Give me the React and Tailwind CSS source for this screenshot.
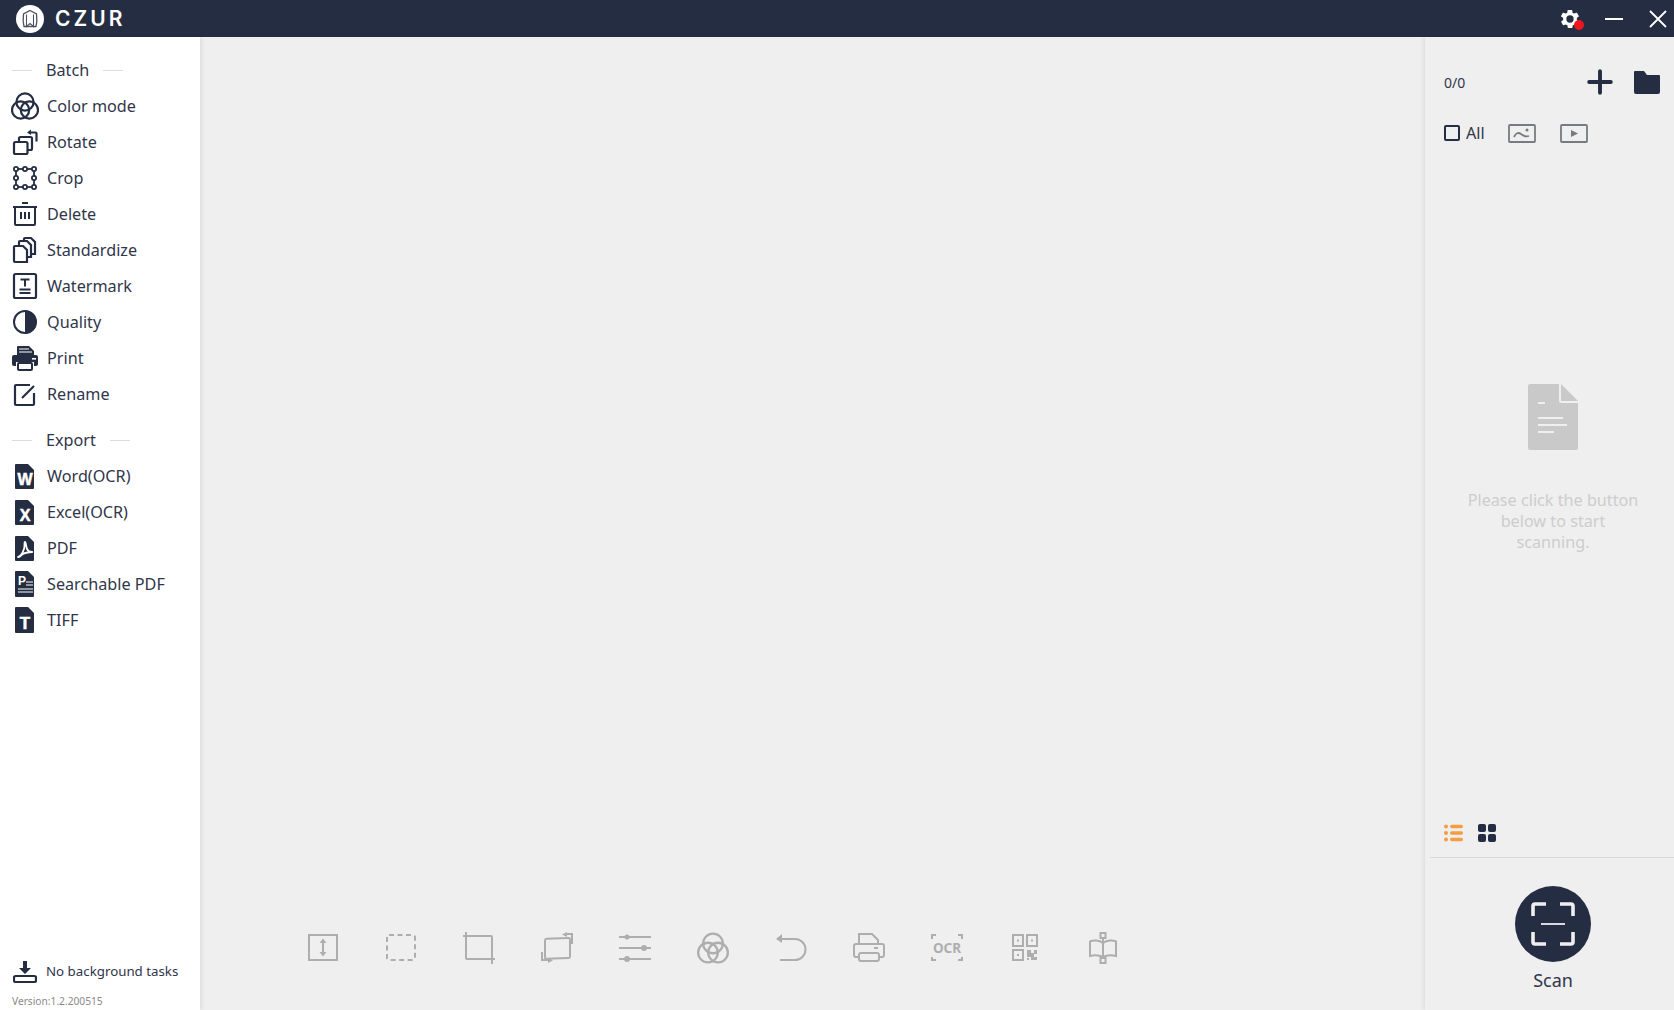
import React from "react"

const navy = "#252d43"

// sidebar icons, 28x28 box
const ColorIcon = ({ color = navy, w = 2.2 }) => (
    <svg viewBox="0 0 28 28" className="w-full h-full" fill="none" stroke={color} strokeWidth={w}>
        <circle cx="14" cy="10" r="8.6" />
        <circle cx="9.6" cy="18" r="8.6" />
        <circle cx="18.4" cy="18" r="8.6" />
    </svg>
)

const RotateIcon = () => (
    <svg viewBox="0 0 28 28" className="w-full h-full" fill="none" stroke={navy} strokeWidth="2.2">
        <rect x="3" y="14" width="13.5" height="12" rx="1.5" />
        <path d="M8 14v-3.5a1.5 1.5 0 0 1 1.5-1.5h10a1.5 1.5 0 0 1 1.5 1.5v10a1.5 1.5 0 0 1-1.5 1.5h-3" />
        <path d="M18 4.5h6.5a1 1 0 0 1 1 1v8" />
        <path d="M20 1.5l-4 3 4 2.5z" fill={navy} stroke="none" />
    </svg>
)

const CropIcon = () => (
    <svg viewBox="0 0 28 28" className="w-full h-full" fill="none" stroke={navy} strokeWidth="1.8">
        <rect x="5" y="5" width="18" height="18" />
        {[[5, 5], [14, 5], [23, 5], [5, 14], [23, 14], [5, 23], [14, 23], [23, 23]].map(([x, y], i) => (
            <circle key={i} cx={x} cy={y} r="2.1" fill="#fff" />
        ))}
    </svg>
)

const DeleteIcon = () => (
    <svg viewBox="0 0 28 28" className="w-full h-full" fill="none" stroke={navy} strokeWidth="2">
        <path d="M11 3h6M2 7h24M4 7v17a1 1 0 0 0 1 1h18a1 1 0 0 0 1-1V7M10 12v7M14 12v7M18 12v7" />
    </svg>
)

const StandardizeIcon = () => (
    <svg viewBox="0 0 28 28" className="w-full h-full" fill="none" stroke={navy} strokeWidth="2.2">
        <path d="M4 10h8l4 4v12H4a1 1 0 0 1-1-1V11a1 1 0 0 1 1-1z" />
        <path d="M8 10V6a1 1 0 0 1 1-1h7l4 4v12h-4" />
        <path d="M13 5V3a1 1 0 0 1 1-1h6l4 4v12h-4" />
    </svg>
)

const WatermarkIcon = () => (
    <svg viewBox="0 0 28 28" className="w-full h-full" fill="none" stroke={navy} strokeWidth="2">
        <rect x="3" y="2" width="22" height="24" rx="1.5" strokeWidth="2.2" />
        <path d="M9.5 7.5h9M14 7.5v7" />
        <path d="M8.5 17.5h11M8.5 21h11" />
    </svg>
)

const QualityIcon = () => (
    <svg viewBox="0 0 28 28" className="w-full h-full">
        <circle cx="14" cy="14" r="11" fill="none" stroke={navy} strokeWidth="2" />
        <path d="M14 2.5a11.5 11.5 0 0 1 0 23z" fill={navy} />
    </svg>
)

const PrintIcon = () => (
    <svg viewBox="0 0 28 28" className="w-full h-full">
        <path d="M6 11V3a1 1 0 0 1 1-1h11l5 5v4z" fill={navy} />
        <path d="M8 5h10M8 8h13" stroke="#fff" strokeWidth="1.2" />
        <path d="M3 11h22a2 2 0 0 1 2 2v7a2 2 0 0 1-2 2h-2v-4H5v4H3a2 2 0 0 1-2-2v-7a2 2 0 0 1 2-2z" fill={navy} />
        <rect x="7" y="19" width="14" height="7" rx="1" fill="none" stroke={navy} strokeWidth="2" />
        <rect x="21" y="14" width="4" height="1.6" fill="#fff" />
    </svg>
)

const RenameIcon = () => (
    <svg viewBox="0 0 28 28" className="w-full h-full" fill="none" stroke={navy} strokeWidth="2.2">
        <path d="M23 13v11a1 1 0 0 1-1 1H5a1 1 0 0 1-1-1V6a1 1 0 0 1 1-1h14" />
        <path d="M11 18L23 6" />
    </svg>
)

const DocIcon = ({ children, wide }) => (
    <svg viewBox="0 0 28 28" className="w-full h-full">
        <path d={wide ? "M5 1h12l6 6v19a1 1 0 0 1-1 1H5a1 1 0 0 1-1-1V2a1 1 0 0 1 1-1z" : "M5 2h12l6 6v18a1 1 0 0 1-1 1H5a1 1 0 0 1-1-1V3a1 1 0 0 1 1-1z"} fill={navy} />
        {children}
    </svg>
)

const Letter = ({ children, size = 15 }) => (
    <text x="14" y="23" textAnchor="middle" fontSize={size} fontWeight="700" fontFamily="'Liberation Sans', sans-serif" fill="#fff" stroke="#fff" strokeWidth="0.5">
        {children}
    </text>
)

const PdfIcon = () => (
    <DocIcon>
        <path d="M7 23c3-1 5-5 6-8s0-7 1-7 1 5 2 7 3 3 5 3-6 0-9 2-4 4-5 3z" fill="none" stroke="#fff" strokeWidth="1.8" strokeLinejoin="round" />
    </DocIcon>
)

const SearchPdfIcon = () => (
    <DocIcon wide>
        <text x="7" y="15" fontSize="12" fontWeight="700" fontFamily="'Liberation Sans', sans-serif" fill="#fff">P</text>
        <path d="M15 12h7M15 15h7M7 19h15M7 22h15" stroke="#fff" strokeWidth="1.2" />
    </DocIcon>
)

const batchItems = [
    { label: "Color mode", icon: <ColorIcon /> },
    { label: "Rotate", icon: <RotateIcon /> },
    { label: "Crop", icon: <CropIcon /> },
    { label: "Delete", icon: <DeleteIcon /> },
    { label: "Standardize", icon: <StandardizeIcon /> },
    { label: "Watermark", icon: <WatermarkIcon /> },
    { label: "Quality", icon: <QualityIcon /> },
    { label: "Print", icon: <PrintIcon /> },
    { label: "Rename", icon: <RenameIcon /> },
]

const exportItems = [
    { label: "Word(OCR)", icon: <DocIcon><Letter size={16}>W</Letter></DocIcon> },
    { label: "Excel(OCR)", icon: <DocIcon><Letter size={16}>X</Letter></DocIcon> },
    { label: "PDF", icon: <PdfIcon /> },
    { label: "Searchable PDF", icon: <SearchPdfIcon /> },
    { label: "TIFF", icon: <DocIcon wide><Letter size={17}>T</Letter></DocIcon> },
]

const SectionTitle = ({ children }) => (
    <div className="h-9 pl-3 flex items-center gap-[14px] text-[#30364a] text-[16.2px]">
        <span className="w-5 h-px bg-[#dcdcdc]"></span>
        <span>{children}</span>
        <span className="w-5 h-px bg-[#dcdcdc]"></span>
    </div>
)

const NavRow = ({ label, icon }) => (
    <div className="h-9 pl-[11px] flex items-center gap-2 text-[#30364a] text-[16.2px]">
        <span className="w-7 h-7 shrink-0">{icon}</span>
        <span className="whitespace-nowrap">{label}</span>
    </div>
)

// bottom toolbar icons, grey
const grey = "#aeaeae"

const toolbarIcons = [
    <svg key="fit" viewBox="0 0 32 32" className="w-8 h-8" fill="none" stroke={grey} strokeWidth="2">
        <rect x="2" y="3" width="28" height="25" />
        <path d="M16 8v15" />
        <path d="M12.5 11L16 6.5l3.5 4.5zM12.5 20l3.5 4.5 3.5-4.5z" fill={grey} stroke="none" />
    </svg>,
    <svg key="select" viewBox="0 0 32 32" className="w-8 h-8" fill="none" stroke={grey} strokeWidth="2">
        <rect x="2" y="3" width="28" height="25" rx="2" strokeDasharray="5 3.5" />
    </svg>,
    <svg key="crop" viewBox="0 0 32 32" className="w-8 h-8" fill="none" stroke={grey} strokeWidth="2">
        <rect x="3" y="4" width="26" height="23" rx="1" />
        <path d="M3 0v4M0 4h3M29 27v5M29 27h3" />
    </svg>,
    <svg key="rotate" viewBox="0 0 32 32" className="w-8 h-8" fill="none" stroke={grey} strokeWidth="2">
        <rect x="4" y="7" width="25" height="20" rx="1.5" transform="skewY(-2)" />
        <path d="M24 2h7v10M1 20v8h9" />
        <path d="M26 0l-5 2.5 5 2.5zM7 26l5 2.5-5 2.5z" fill={grey} stroke="none" />
    </svg>,
    <svg key="sliders" viewBox="0 0 32 32" className="w-8 h-8" fill="none" stroke={grey} strokeWidth="2">
        <path d="M0 5h32M0 16h32M0 27h32" />
        <circle cx="8" cy="5" r="2.5" fill={grey} stroke="none" />
        <circle cx="25" cy="16" r="3" fill={grey} stroke="none" />
        <circle cx="8" cy="27" r="3" fill={grey} stroke="none" />
    </svg>,
    <ColorIcon key="color" color={grey} w={2} />,
    <svg key="undo" viewBox="0 0 32 32" className="w-8 h-8" fill="none" stroke={grey} strokeWidth="2">
        <path d="M5 7h15a10 10 0 0 1 0 21H5" />
        <path d="M7 2L1 7l6 4z" fill={grey} stroke="none" />
    </svg>,
    <svg key="print" viewBox="0 0 32 32" className="w-8 h-8" fill="none" stroke={grey} strokeWidth="2">
        <path d="M6 12V2h13l6 6v4M6 25H3a2 2 0 0 1-2-2V14a2 2 0 0 1 2-2h26a2 2 0 0 1 2 2v9a2 2 0 0 1-2 2h-3" />
        <rect x="6" y="21" width="20" height="8" rx="2" />
        <path d="M21 16h4" />
    </svg>,
    <svg key="ocr" viewBox="0 0 32 32" className="w-8 h-8" fill="none" stroke={grey} strokeWidth="2">
        <path d="M5 3H1v4M27 3h4v4M1 25v3h4M31 25v3h-4" />
        <text x="16" y="21" textAnchor="middle" fontSize="13.5" fontWeight="700" fontFamily="'Noto Sans', sans-serif" fill={grey} stroke="none">OCR</text>
    </svg>,
    <svg key="qr" viewBox="0 0 32 32" className="w-8 h-8" fill="none" stroke={grey} strokeWidth="2">
        <rect x="4" y="3" width="10" height="11" />
        <rect x="18" y="3" width="10" height="11" />
        <rect x="4" y="18" width="10" height="10" />
        <path d="M8 7.5h2v2H8zM22 7.5h2v2h-2zM8 22h2v2H8z" fill={grey} stroke="none" />
        <path d="M18 18h4v3h3v-3h3v4h-3v3h3v3h-6v-3h-4zM18 26h2v2h-2z" fill={grey} stroke="none" />
    </svg>,
    <svg key="book" viewBox="0 0 32 32" className="w-8 h-8" fill="none" stroke={grey} strokeWidth="2">
        <path d="M16 11C12 8 6 8 3 9.5V24c4-1 9-1 13 1 4-2 9-2 13-1V9.5C26 8 20 8 16 11z" />
        <path d="M16 4v26" />
        <rect x="13.5" y="1" width="5" height="5" fill="#efefef" />
        <rect x="13.5" y="26" width="5" height="5" fill="#efefef" />
    </svg>,
]

const App = () => {
    return (
        <div className="w-[1674px] h-[1010px] flex flex-col overflow-hidden bg-[#efefef] font-['Noto_Sans','Open_Sans',sans-serif]">
            <header className="h-[37px] shrink-0 bg-[#252d43] flex items-center pl-4 text-white">
                <svg viewBox="0 0 28 28" className="w-7 h-7">
                    <circle cx="14" cy="14" r="14" fill="#fff" />
                    <path d="M14 5.5l6.5 3.5c.5 4 .5 9-.5 12.5H8C7 18 7 13 7.500 9z" fill="none" stroke="#4b5163" strokeWidth="1.3" />
                    <path d="M10.500 9.500v12l3.500-3 3.500 3v-12" fill="none" stroke="#4b5163" strokeWidth="1.1" />
                </svg>
                <span className="ml-[11px] text-[21px] leading-none font-['Inter',sans-serif] font-semibold tracking-[3px]">CZUR</span>
                <div className="ml-auto flex items-center">
                    <div className="relative w-[22px] h-[22px]">
                        <svg viewBox="0 0 24 24" className="w-full h-full" fill="#fff">
                            <path d="M19.4 13c.1-.3.1-.7.1-1s0-.7-.1-1l2.100-1.600c.2-.2.3-.4.1-.7l-2-3.400c-.1-.2-.4-.3-.6-.2l-2.500 1c-.5-.4-1.100-.7-1.700-1l-.4-2.600c0-.3-.2-.4-.5-.4h-4c-.2 0-.5.2-.5.4l-.4 2.600c-.6.3-1.100.6-1.700 1l-2.500-1c-.2-.1-.5 0-.6.2l-2 3.400c-.1.3-.1.5.1.7L4.600 11c-.1.3-.1.7-.1 1s0 .7.1 1l-2.100 1.600c-.2.2-.3.4-.1.7l2 3.400c.1.2.4.3.6.2l2.500-1c.5.4 1.100.7 1.700 1l.4 2.600c0 .3.3.4.5.4h4c.3 0 .5-.2.5-.4l.4-2.600c.6-.3 1.200-.6 1.700-1l2.500 1c.2.1.5 0 .6-.2l2-3.400c.2-.3.1-.5-.1-.7zM12 16a4 4 0 1 1 0-8 4 4 0 0 1 0 8z" fillRule="evenodd" />
                        </svg>
                        <span className="absolute -right-[3px] bottom-0 w-[10px] h-[10px] rounded-full bg-[#f0141e]"></span>
                    </div>
                    <span className="ml-[24px] w-[18px] h-[2px] bg-white"></span>
                    <svg viewBox="0 0 18 18" className="ml-[26px] mr-[7px] w-[18px] h-[18px]" stroke="#fff" strokeWidth="1.8">
                        <path d="M1 1l16 16M17 1L1 17" />
                    </svg>
                </div>
            </header>

            <div className="flex-1 flex min-h-0">
                <aside className="relative z-10 w-[200px] shrink-0 bg-white shadow-[2px_0_4px_rgba(0,0,0,0.07)] flex flex-col pt-[15px]">
                    <SectionTitle>Batch</SectionTitle>
                    {batchItems.map((item) => <NavRow key={item.label} {...item} />)}
                    <div className="h-[10px]"></div>
                    <SectionTitle>Export</SectionTitle>
                    {exportItems.map((item) => <NavRow key={item.label} {...item} />)}
                    <div className="mt-auto pl-[13px]">
                        <div className="flex items-center gap-[9px] text-[13.3px] text-[#30364a]">
                            <svg viewBox="0 0 24 24" className="w-6 h-6 shrink-0" fill={navy}>
                                <path d="M10 1h4v7h4l-6 6-6-6h4z" />
                                <rect x="1" y="16" width="22" height="6" rx="1.5" fill="none" stroke={navy} strokeWidth="2.2" />
                            </svg>
                            <span className="whitespace-nowrap">No background tasks</span>
                        </div>
                        <div className="mt-2 -ml-px text-[10.2px] leading-[18px] text-[#8a8a8a] whitespace-nowrap">Version:1.2.200515</div>
                    </div>
                </aside>

                <main className="flex-1 flex flex-col justify-end pb-[46px] pl-[107px]">
                    <div className="flex items-center gap-[46px]">
                        {toolbarIcons.map((icon, i) => (
                            <div key={i} className="w-8 h-8 shrink-0">{icon}</div>
                        ))}
                    </div>
                </main>

                <aside className="relative z-10 w-[249px] shrink-0 bg-[#efefef] shadow-[-2px_0_4px_rgba(0,0,0,0.07)] flex flex-col">
                    <div className="pl-[19px] pr-[13px] pt-[30px] flex items-center h-[60px]">
                        <span className="text-[14px] text-[#30364a]">0/0</span>
                        <svg viewBox="0 0 24 24" className="ml-auto w-[26px] h-[26px]" stroke={navy} strokeWidth="3.6" strokeLinecap="round">
                            <path d="M12 2v20M2 12h20" />
                        </svg>
                        <svg viewBox="0 0 28 24" className="ml-5 w-[28px] h-[24px]" fill={navy}>
                            <path d="M1 2a1 1 0 0 1 1-1h9l3 4h12a1 1 0 0 1 1 1v16a2 2 0 0 1-2 2H3a2 2 0 0 1-2-2z" />
                        </svg>
                    </div>
                    <div className="pl-[19px] mt-[21px] flex items-center h-[30px]">
                        <span className="w-[16px] h-[16px] rounded-[2px] border-2 border-[#252d43]"></span>
                        <span className="ml-[6px] text-[16.2px] text-[#30364a]">All</span>
                        <svg viewBox="0 0 28 19" className="ml-[23px] w-7 h-[19px]" fill="none" stroke="#777a80" strokeWidth="1.8">
                            <rect x="1" y="1" width="26" height="17" rx="1" />
                            <path d="M6 13c2-4 4-5 7-3s4 3 8 2" strokeWidth="1.8" />
                            <circle cx="19" cy="6" r="1.5" fill="#777a80" stroke="none" />
                        </svg>
                        <svg viewBox="0 0 28 19" className="ml-[24px] w-7 h-[19px]" fill="none" stroke="#777a80" strokeWidth="1.8">
                            <rect x="1" y="1" width="26" height="17" rx="1" />
                            <path d="M11 6l7 3.5-7 3.5z" fill="#777a80" stroke="none" />
                        </svg>
                    </div>

                    <div className="mt-[236px] pl-[7px] flex flex-col items-center">
                        <svg viewBox="0 0 50 66" className="w-[50px] h-[66px]">
                            <path d="M2 0h29v17a2 2 0 0 0 2 2h17v45a2 2 0 0 1-2 2H2a2 2 0 0 1-2-2V2a2 2 0 0 1 2-2z" fill="#c9c9c9" />
                            <path d="M33 0l17 17H33z" fill="#c9c9c9" />
                            <path d="M10 19h7M10 34h25M10 41h29M10 48h16" stroke="#efefef" strokeWidth="2.2" />
                        </svg>
                        <p className="mt-[40px] w-[180px] text-center text-[16.2px] leading-[21px] text-[#cdcdcd]">
                            Please click the button below to start scanning.
                        </p>
                    </div>

                    <div className="mt-auto">
                        <div className="pl-[19px] h-[48px] flex items-center gap-[15px]">
                            <svg viewBox="0 0 19 18" className="w-[19px] h-[18px]" fill="#f79c42">
                                <circle cx="2" cy="2.5" r="2" />
                                <circle cx="2" cy="9" r="2" />
                                <circle cx="2" cy="15.5" r="2" />
                                <rect x="6" y="0.8" width="13" height="3.4" rx="1.7" />
                                <rect x="6" y="7.3" width="13" height="3.4" rx="1.7" />
                                <rect x="6" y="13.8" width="13" height="3.4" rx="1.7" />
                            </svg>
                            <svg viewBox="0 0 18 18" className="w-[18px] h-[18px]" fill={navy}>
                                <rect x="0" y="0" width="8" height="8" rx="2" />
                                <rect x="10" y="0" width="8" height="8" rx="2" />
                                <rect x="0" y="10" width="8" height="8" rx="2" />
                                <rect x="10" y="10" width="8" height="8" rx="2" />
                            </svg>
                        </div>
                        <div className="ml-[5px] h-px bg-[#d9d9d9]"></div>
                        <div className="h-[152px] pt-[28px] pl-[7px] flex flex-col items-center">
                            <div className="w-[76px] h-[76px] rounded-full bg-[#252d43] flex items-center justify-center">
                                <svg viewBox="0 0 44 44" className="w-11 h-11" fill="none" stroke="#efefef" strokeWidth="3.6">
                                    <path d="M2 14V4a2 2 0 0 1 2-2h11M29 2h11a2 2 0 0 1 2 2v10M2 30v10a2 2 0 0 0 2 2h11M29 42h11a2 2 0 0 0 2-2V30" />
                                    <path d="M10 22h24" strokeWidth="1.8" />
                                </svg>
                            </div>
                            <span className="mt-[5px] text-[18px] text-[#30364a]">Scan</span>
                        </div>
                    </div>
                </aside>
            </div>
        </div>
    )
}

export default App
